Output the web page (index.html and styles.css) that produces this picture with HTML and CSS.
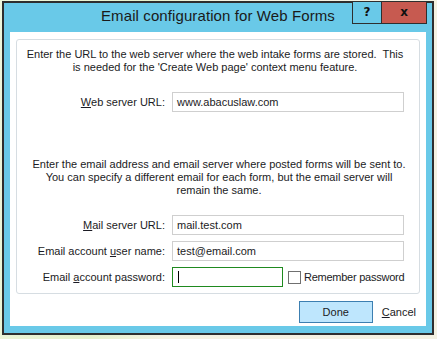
FILE: index.html
```html
<!DOCTYPE html>
<html>
<head>
<meta charset="utf-8">
<link rel="stylesheet" href="styles.css">
</head>
<body>
<div class="window">
  <div class="titlebar">
    <span class="title">Email configuration for Web Forms</span>
    <div class="caption-btns">
      <div class="cap-btn help">?</div>
      <div class="cap-btn close">x</div>
    </div>
  </div>
  <div class="client">
    <div class="group">
      <p class="para para1">Enter the URL to the web server where the web intake forms are stored.&nbsp; This<br>is needed for the 'Create Web page' context menu feature.</p>
      <div class="row row-first">
        <span class="label"><u>W</u>eb server URL:</span>
        <div class="field">www.abacuslaw.com</div>
      </div>
      <p class="para para2">Enter the email address and email server where posted forms will be sent to.<br>You can specify a different email for each form, but the email server will<br>remain the same.</p>
      <div class="rows">
        <div class="row">
          <span class="label"><u>M</u>ail server URL:</span>
          <div class="field">mail.test.com</div>
        </div>
        <div class="row">
          <span class="label">Email account <u>u</u>ser name:</span>
          <div class="field">test@email.com</div>
        </div>
        <div class="row">
          <span class="label">Email <u>a</u>ccount password:</span>
          <div class="field field-pw focused"><span class="caret"></span></div>
          <span class="check"></span>
          <span class="check-label">Remember password</span>
        </div>
      </div>
    </div>
    <div class="actions">
      <div class="btn-done">Done</div>
      <span class="cancel"><u>C</u>ancel</span>
    </div>
  </div>
</div>
</body>
</html>
```

FILE: styles.css
```css
html, body {
  margin: 0;
  padding: 0;
}
body {
  width: 437px;
  height: 339px;
  overflow: hidden;
  background: linear-gradient(100deg, #eef6dc 0%, #e4f0cc 30%, #f4f2e2 45%, #f3f1e2 100%);
  font-family: "Liberation Sans", Arial, sans-serif;
  font-size: 11px;
  color: #1b1b24;
}
.window {
  position: relative;
  margin: 1px 0 0 2px;
  width: 432px;
  height: 334px;
  box-sizing: border-box;
  border: 2px solid #2e2e2e;
  background: #69c9e8;
}
.titlebar {
  height: 29px;
  text-align: center;
}
.title {
  display: inline-block;
  font-size: 15px;
  letter-spacing: 0.1px;
  line-height: 26px;
  color: #1a1a1a;
}
.caption-btns {
  position: absolute;
  top: -2px;
  right: 5px;
  display: flex;
}
.cap-btn {
  height: 21px;
  border: 1px solid #2e2e2e;
  font-family: "DejaVu Sans", sans-serif;
  font-weight: bold;
  font-size: 12px;
  line-height: 20px;
  text-align: center;
  color: #111;
}
.help {
  width: 28px;
  background: #69c9e8;
  border-right: none;
}
.close {
  width: 44px;
  background: #c75a50;
}
.client {
  margin-left: 6px;
  width: 416px;
  height: 294px;
  background: #fff;
  padding: 7px 0 0 6px;
  box-sizing: border-box;
}
.group {
  width: 404px;
  box-sizing: border-box;
  border: 1px solid #d6dde2;
  border-radius: 3px;
  padding: 8px 0 6px;
}
.para {
  margin: 0;
  line-height: 13px;
  text-align: center;
  padding: 0 13px 0 7px;
}
.para2 {
  margin-top: 46px;
  padding: 0 9px 0 11px;
}
.row {
  display: flex;
  align-items: center;
  height: 20px;
}
.row-first {
  margin-top: 18px;
}
.rows {
  margin-top: 18px;
  display: flex;
  flex-direction: column;
  gap: 6px;
}
.label {
  width: 148px;
  text-align: right;
  margin-right: 7px;
  white-space: nowrap;
}
.field {
  width: 232px;
  height: 20px;
  box-sizing: border-box;
  border: 1px solid #cfcfcf;
  padding-left: 4px;
  line-height: 18px;
}
.field-pw {
  width: 111px;
  border-color: #1f8a1f;
  position: relative;
}
.caret {
  display: block;
  width: 1px;
  height: 12px;
  margin: 3px 0 0 1px;
  background: #000;
}
.check {
  width: 13px;
  height: 13px;
  box-sizing: border-box;
  border: 1px solid #707070;
  background: #fff;
  margin-left: 5px;
  margin-right: 3px;
}
.check-label {
  letter-spacing: -0.25px;
  white-space: nowrap;
}
.actions {
  display: flex;
  align-items: center;
  justify-content: flex-end;
  margin-top: 7px;
  padding-right: 10px;
}
.btn-done {
  width: 74px;
  height: 22px;
  box-sizing: border-box;
  border: 1px solid #3c7fb1;
  background: #bee6fd;
  text-align: center;
  line-height: 20px;
}
.cancel {
  margin-left: 9px;
}
```
